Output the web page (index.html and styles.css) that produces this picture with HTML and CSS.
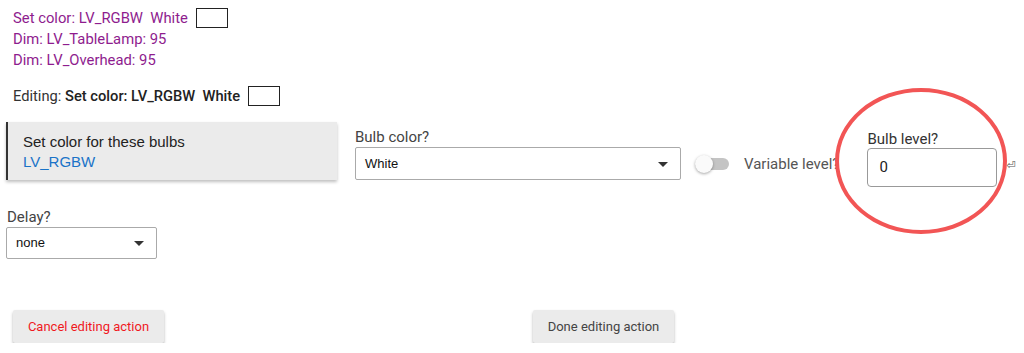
FILE: index.html
```html
<!DOCTYPE html>
<html lang="en">
<head>
    <meta charset="UTF-8">
    <title>Edit action</title>
    <link rel="stylesheet" href="styles.css">
</head>
<body>
    <div class="actions">
        <div class="action-line">Set color: LV_RGBW&nbsp; White <span class="swatch"></span></div>
        <div class="action-line">Dim: LV_TableLamp: 95</div>
        <div class="action-line">Dim: LV_Overhead: 95</div>
    </div>

    <div class="editing">Editing: <b>Set color: LV_RGBW&nbsp; White</b> <span class="swatch"></span></div>

    <div class="edit-row">
        <div class="bulb-card">
            <div>Set color for these bulbs</div>
            <div class="bulb-name">LV_RGBW</div>
        </div>

        <div class="field color-field">
            <label>Bulb color?</label>
            <div class="select">White <span class="caret"></span></div>
        </div>

        <div class="toggle-field">
            <span class="toggle"><span class="thumb"></span></span>
            <span class="toggle-label">Variable level?</span>
        </div>

        <div class="field level-field">
            <label>Bulb level?</label>
            <div class="level-input">0</div>
        </div>
        <span class="enter">&#x23CE;&#xFE0E;</span>
        <div class="highlight"></div>
    </div>

    <div class="field delay-field">
        <label>Delay?</label>
        <div class="select">none <span class="caret"></span></div>
    </div>

    <div class="buttons">
        <button class="btn cancel">Cancel editing action</button>
        <button class="btn done">Done editing action</button>
    </div>
</body>
</html>
```

FILE: styles.css
```css
body {
    margin: 0;
    padding: 8px 0 0 0;
    font-family: Roboto, "Liberation Sans", sans-serif;
    font-size: 14px;
    color: #333;
    background: white;
}
.actions {
    padding-left: 13px;
    color: #8e1c8e;
    font-size: 14.8px;
}
.action-line {
    height: 21px;
    line-height: 21px;
}
.swatch {
    display: inline-block;
    width: 30px;
    height: 18px;
    border: 1px solid #222;
    vertical-align: -5px;
    margin-left: 4px;
}
.editing {
    padding-left: 13px;
    margin-top: 15px;
    height: 21px;
    line-height: 21px;
    font-size: 14.7px;
}
.editing b {
    font-weight: 500;
    color: #222;
}
.edit-row {
    position: relative;
    display: flex;
    align-items: flex-start;
    margin-top: 15px;
}
.bulb-card {
    margin-left: 6px;
    width: 331px;
    height: 58px;
    box-sizing: border-box;
    padding: 10px 15px;
    background: #ebebeb;
    border-left: 2px solid #333;
    box-shadow: 0 2px 3px rgba(0,0,0,0.25);
    font-family: "Liberation Sans", Arial, sans-serif;
    font-size: 15px;
    line-height: 20px;
    color: #222;
}
.bulb-name {
    color: #1a73c8;
}
.field label {
    display: block;
    font-size: 15px;
    color: #444;
    line-height: 20px;
}
.color-field {
    margin-left: 18px;
    padding-top: 5px;
}
.select {
    position: relative;
    box-sizing: border-box;
    border: 1px solid #aaa;
    border-radius: 2px;
    background: white;
    font-family: "Liberation Sans", Arial, sans-serif;
    font-size: 13px;
    color: #111;
    padding-left: 9px;
}
.color-field .select {
    width: 326px;
    height: 33px;
    line-height: 31px;
}
.caret {
    position: absolute;
    right: 12px;
    top: 50%;
    margin-top: -2px;
    border-left: 5px solid transparent;
    border-right: 5px solid transparent;
    border-top: 5px solid #333;
}
.toggle-field {
    display: flex;
    align-items: center;
    margin-left: 14px;
    margin-top: 33px;
}
.toggle {
    position: relative;
    display: inline-block;
    width: 34px;
    height: 12px;
    border-radius: 6px;
    background: #c4c4c4;
}
.thumb {
    position: absolute;
    left: 0;
    top: -3px;
    width: 18px;
    height: 18px;
    border-radius: 50%;
    background: #fafafa;
    box-shadow: 0 1px 3px rgba(0,0,0,0.35);
}
.toggle-label {
    margin-left: 15px;
    font-size: 15px;
    color: #555;
}
.level-field {
    margin-left: 28px;
    padding-top: 7px;
}
.level-field label {
    color: #333;
}
.level-input {
    box-sizing: border-box;
    width: 130px;
    height: 39px;
    margin-top: -1px;
    border: 1px solid #999;
    border-radius: 4px;
    padding-left: 11px;
    line-height: 37px;
    font-size: 15px;
    color: #222;
}
.enter {
    margin-left: 9px;
    margin-top: 37px;
    font-family: "DejaVu Sans", sans-serif;
    font-size: 11px;
    color: #555;
}
.highlight {
    position: absolute;
    left: 835px;
    top: -34px;
    width: 164px;
    height: 138px;
    border: 4.5px solid #f25555;
    border-radius: 50%;
}
.delay-field {
    margin: 20px 0 0 6px;
}
.delay-field label {
    padding-left: 1px;
}
.delay-field .select {
    width: 151px;
    height: 32px;
    line-height: 30px;
}
.buttons {
    display: flex;
    margin-top: 51px;
    padding-left: 13px;
}
.btn {
    height: 33px;
    border: none;
    border-radius: 2px;
    background: #ebebeb;
    box-shadow: 0 2px 3px rgba(0,0,0,0.3);
    font-family: Roboto, "Liberation Sans", sans-serif;
    font-size: 13px;
    padding: 0;
    white-space: nowrap;
}
.cancel {
    width: 151px;
    color: #f0191e;
}
.done {
    width: 141px;
    margin-left: 369px;
    color: #444;
}
```
